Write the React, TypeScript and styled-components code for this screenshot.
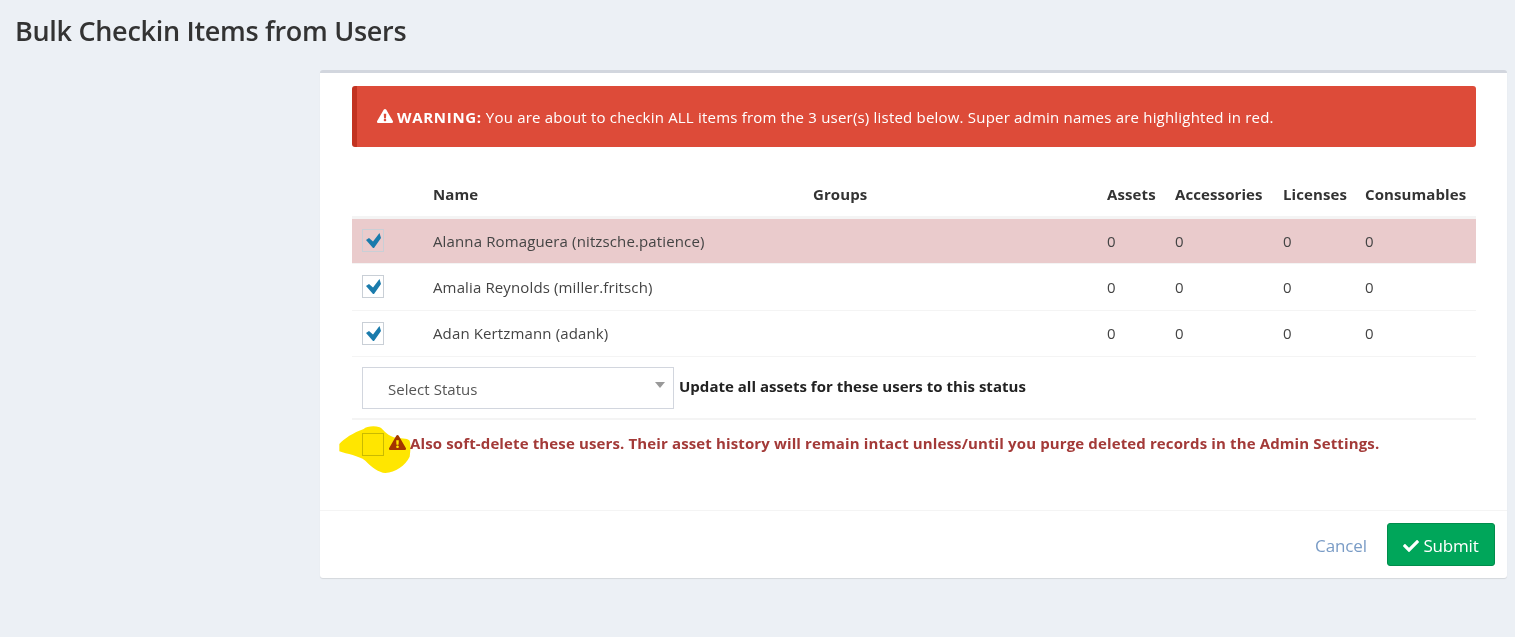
import { FaCheck, FaExclamationTriangle } from "react-icons/fa";
import styled, { createGlobalStyle } from "styled-components";

const GlobalStyle = createGlobalStyle`
  html, body {
    margin: 0;
    padding: 0;
    background-color: #ecf0f5;
    font-family: "Open Sans", "Noto Sans", sans-serif;
    font-size: 15px;
    color: #333;
  }
`;

const Page = styled.div`
  width: 1515px;
  height: 637px;
  overflow: hidden;
  box-sizing: border-box;
`;
const PageTitle = styled.h1`
  margin: 0;
  padding: 12px 15px 0;
  height: 70px;
  box-sizing: border-box;
  font-size: 27px;
  line-height: 37px;
  font-weight: 600;
  letter-spacing: -0.3px;
  color: #333;
`;
const Card = styled.div`
  margin: 0 8px 0 320px;
  height: 508px;
  box-sizing: border-box;
  display: flex;
  flex-direction: column;
  background-color: #fff;
  border-top: 3px solid #d2d6de;
  border-radius: 3px;
  box-shadow: 0 1px 1px rgba(0, 0, 0, 0.1);
`;
const CardBody = styled.div`
  flex: 1;
  padding: 13px 31px 0 32px;
`;
const Alert = styled.div`
  height: 61px;
  box-sizing: border-box;
  display: flex;
  align-items: center;
  gap: 4px;
  padding-left: 20px;
  background-color: #dd4b39;
  border-left: 5px solid #c23321;
  border-radius: 3px;
  color: #fff;
  font-size: 15px;
  letter-spacing: 0.2px;
  svg {
    font-size: 16px;
    margin-top: -1px;
  }
  strong {
    font-weight: 700;
    letter-spacing: 0.7px;
    margin-right: 4px;
  }
`;
const Table = styled.table`
  width: 100%;
  margin-top: 25px;
  table-layout: fixed;
  border-collapse: collapse;
`;
const HeadCell = styled.th<{ $width: number }>`
  width: ${(p) => p.$width}px;
  height: 45px;
  padding: 0 10px;
  box-sizing: border-box;
  border-bottom: 3px solid #f4f4f4;
  text-align: left;
  font-size: 15px;
  font-weight: 700;
  letter-spacing: 0.1px;
  color: #333;
  white-space: nowrap;
`;
const Row = styled.tr<{ $admin?: boolean; $height: number }>`
  height: ${(p) => p.$height}px;
  background-color: ${(p) => (p.$admin ? "#eacbcc" : "#fff")};
`;
const Cell = styled.td`
  padding: 0 10px;
  box-sizing: border-box;
  border-bottom: 1px solid #f4f4f4;
  font-size: 15px;
  letter-spacing: 0.13px;
  color: #444;
  white-space: nowrap;
`;
const BoxCell = styled(Cell)`
  line-height: 0;
`;
const StatusCell = styled.td`
  height: 63px;
  padding: 1px 10px 0;
  box-sizing: border-box;
  border-bottom: 2px solid #f4f4f4;
`;
const StatusRow = styled.div`
  display: flex;
  align-items: flex-start;
  gap: 5px;
`;
const SelectBox = styled.div`
  position: relative;
  width: 312px;
  height: 42px;
  box-sizing: border-box;
  padding: 11px 0 0 25px;
  border: 1px solid #d2d6de;
  font-size: 15px;
  line-height: 20px;
  letter-spacing: 0.05px;
  color: #555;
  &::after {
    content: "";
    position: absolute;
    top: 14px;
    right: 8px;
    border-style: solid;
    border-width: 6px 5px 0;
    border-color: #999 transparent transparent;
  }
`;
const StatusLabel = styled.span`
  padding-top: 9px;
  font-size: 15px;
  line-height: 20px;
  font-weight: 700;
  letter-spacing: 0.02px;
  color: #222;
`;
const DeleteRow = styled.div`
  position: relative;
  display: flex;
  align-items: flex-start;
  margin: 13px 0 0 10px;
`;
const DeleteText = styled.span`
  margin-left: 5px;
  font-size: 15px;
  line-height: 20px;
  font-weight: 700;
  color: #a33a38;
  letter-spacing: 0.13px;
  white-space: nowrap;
  svg {
    font-size: 17px;
    vertical-align: -2px;
    margin-right: 4px;
    color: #a33a00;
  }
`;
const CheckBox = styled.span`
  display: inline-flex;
  align-items: center;
  justify-content: center;
  width: 22px;
  height: 23px;
  box-sizing: border-box;
  border: 1px solid #c9cfd6;
  background-color: transparent;
  flex: none;
  svg {
    width: 15px;
    height: 15px;
    fill: #1a7bac;
  }
`;
const Highlight = styled.svg`
  position: absolute;
  left: -25px;
  top: -9px;
  width: 75px;
  height: 50px;
  mix-blend-mode: multiply;
  pointer-events: none;
`;
const CardFooter = styled.div`
  height: 68px;
  box-sizing: border-box;
  display: flex;
  align-items: center;
  justify-content: flex-end;
  gap: 20px;
  padding: 0 12px 0 0;
  border-top: 1px solid #f4f4f4;
`;
const CancelLink = styled.a`
  margin-top: 2px;
  font-size: 17px;
  letter-spacing: -0.1px;
  color: #7a9cc6;
`;
const SubmitButton = styled.button`
  width: 108px;
  height: 43px;
  display: flex;
  align-items: center;
  justify-content: center;
  gap: 4px;
  padding: 2px 0 0;
  background-color: #00a65a;
  border: 1px solid #008d4c;
  border-radius: 3px;
  color: #fff;
  font-family: inherit;
  font-size: 17px;
  letter-spacing: -0.2px;
  svg {
    font-size: 16px;
  }
`;

const COLUMNS = [
  { label: "", width: 71 },
  { label: "Name", width: 380 },
  { label: "Groups", width: 294 },
  { label: "Assets", width: 68 },
  { label: "Accessories", width: 108 },
  { label: "Licenses", width: 82 },
  { label: "Consumables", width: 121 },
];

const USERS = [
  { name: "Alanna Romaguera (nitzsche.patience)", admin: true, height: 46 },
  { name: "Amalia Reynolds (miller.fritsch)", admin: false, height: 47 },
  { name: "Adan Kertzmann (adank)", admin: false, height: 46 },
];

function Tick(): JSX.Element {
  return (
    <svg viewBox="0 0 15 15">
      <path d="M0 7 L3 5 L7 8.5 L13.5 0 L15 5 L8 15 L7 15 Z" />
    </svg>
  );
}

function App(): JSX.Element {
  return (
    <Page>
      <GlobalStyle />
      <PageTitle>Bulk Checkin Items from Users</PageTitle>
      <Card>
        <CardBody>
          <Alert>
            <FaExclamationTriangle />
            <span>
              <strong>WARNING:</strong>
              You are about to checkin ALL items from the 3 user(s) listed
              below. Super admin names are highlighted in red.
            </span>
          </Alert>
          <Table>
            <thead>
              <tr>
                {COLUMNS.map((column) => (
                  <HeadCell key={column.label} $width={column.width}>
                    {column.label}
                  </HeadCell>
                ))}
              </tr>
            </thead>
            <tbody>
              {USERS.map((user) => (
                <Row key={user.name} $admin={user.admin} $height={user.height}>
                  <BoxCell>
                    <CheckBox>
                      <Tick />
                    </CheckBox>
                  </BoxCell>
                  <Cell>{user.name}</Cell>
                  <Cell />
                  <Cell>0</Cell>
                  <Cell>0</Cell>
                  <Cell>0</Cell>
                  <Cell>0</Cell>
                </Row>
              ))}
              <tr>
                <StatusCell colSpan={7}>
                  <StatusRow>
                    <SelectBox>Select Status</SelectBox>
                    <StatusLabel>
                      Update all assets for these users to this status
                    </StatusLabel>
                  </StatusRow>
                </StatusCell>
              </tr>
            </tbody>
          </Table>
          <DeleteRow>
            <CheckBox />
            <DeleteText>
              <FaExclamationTriangle />
              Also soft-delete these users. Their asset history will remain
              intact unless/until you purge deleted records in the Admin
              Settings.
            </DeleteText>
            <Highlight viewBox="20 490 225 150">
              <path
                d="M27 550 C40 535 70 515 100 505 C108 498 130 494 148 500 C160 505 165 522 190 530 C210 534 230 532 238 540 C242 555 240 575 238 588 C225 615 195 635 165 637 C145 635 125 620 105 600 C85 585 50 580 27 572 Z"
                fill="#ffe600"
              />
            </Highlight>
          </DeleteRow>
        </CardBody>
        <CardFooter>
          <CancelLink>Cancel</CancelLink>
          <SubmitButton>
            <FaCheck />
            Submit
          </SubmitButton>
        </CardFooter>
      </Card>
    </Page>
  );
}

export default App;
